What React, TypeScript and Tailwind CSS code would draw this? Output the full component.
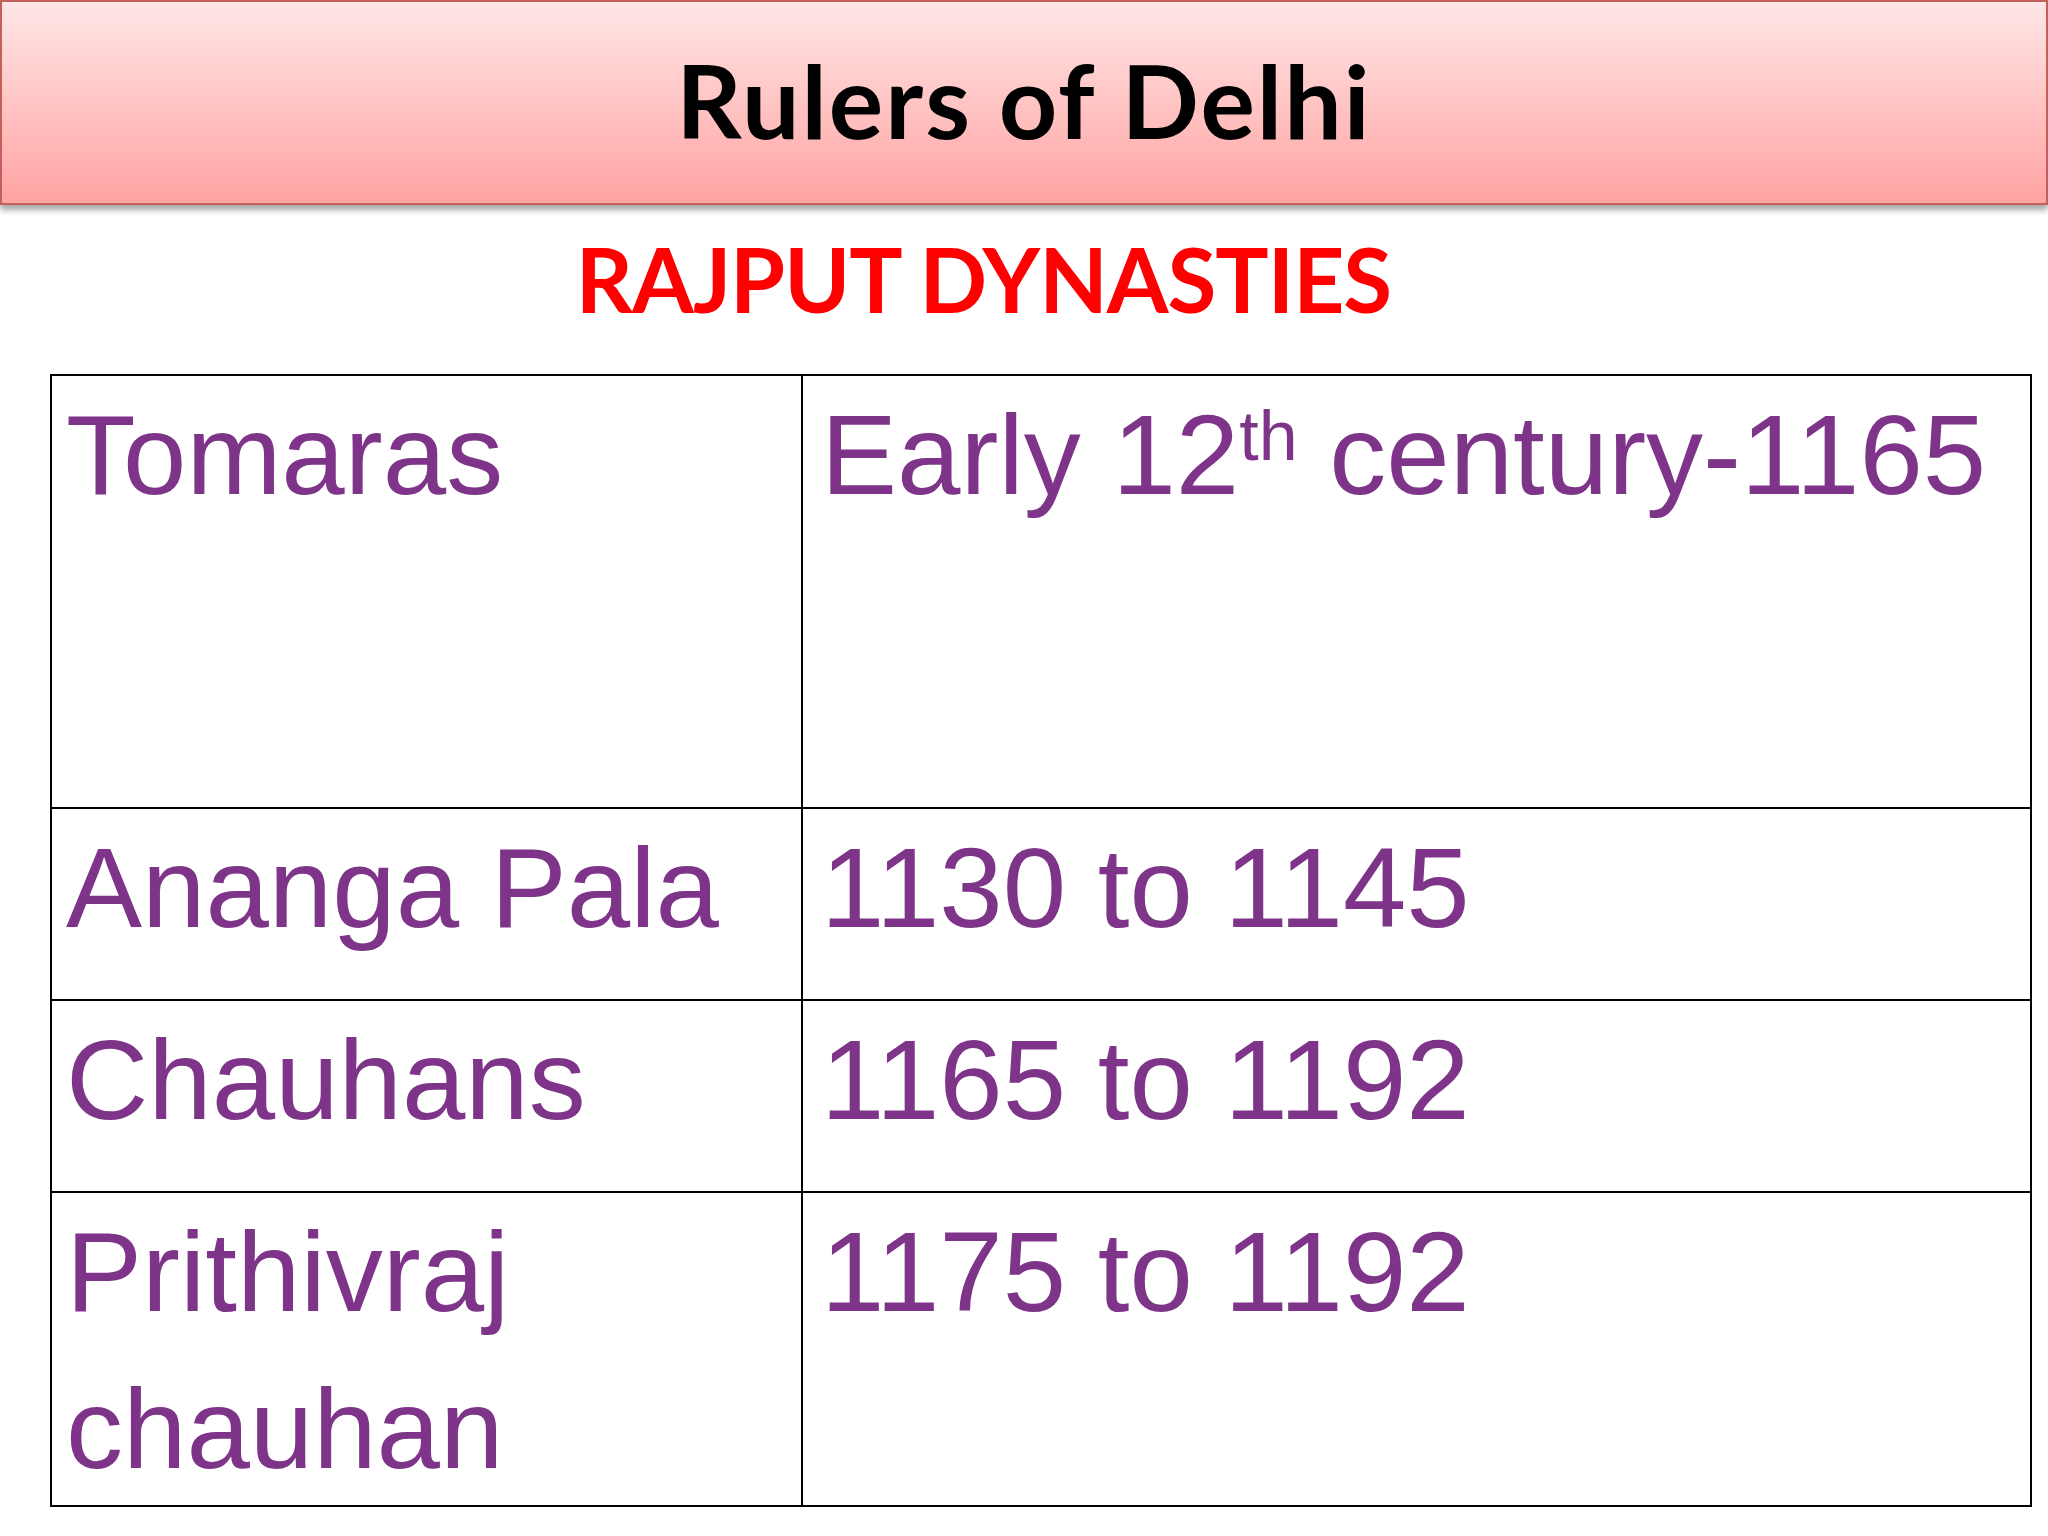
import React from "react";

const cellText =
  "font-['Liberation_Sans',Arial,sans-serif] text-[114px] leading-[157px] text-[#7e3488]";

export default function App() {
  return (
    <div className="w-[2048px] h-[1536px] bg-white overflow-hidden">
      <header className="h-[205px] border-2 border-[#c4605c] bg-gradient-to-b from-[#ffe6e6] to-[#ffa3a3] shadow-[0_5px_6px_rgba(0,0,0,0.35)] flex items-center justify-center">
        <h1 className="font-['Lato',sans-serif] font-bold text-[102px] leading-none text-black pb-[6px] tracking-[2px]">
          Rulers of Delhi
        </h1>
      </header>
      <div className="flex justify-center pr-[81px] mt-[23px] h-[100px] items-center">
        <h2 className="font-['Lato',sans-serif] font-bold text-[89px] leading-none text-[#ff0000] tracking-[-1px]">
          RAJPUT DYNASTIES
        </h2>
      </div>
      <div className="ml-[50px] mt-[46px] w-[1982px] grid grid-cols-[751px_1229px] border-l-2 border-t-2 border-black">
        <div className={`h-[433px] border-r-2 border-b-2 border-black pl-[14px] ${cellText}`}>
          Tomaras
        </div>
        <div className={`h-[433px] border-r-2 border-b-2 border-black pl-[18px] whitespace-nowrap ${cellText}`}>
          Early 12
          <span className="text-[70px] leading-none align-[34px]">th</span> century-1165
        </div>
        <div className={`h-[192px] border-r-2 border-b-2 border-black pl-[14px] ${cellText}`}>
          Ananga Pala
        </div>
        <div className={`h-[192px] border-r-2 border-b-2 border-black pl-[18px] ${cellText}`}>
          1130 to 1145
        </div>
        <div className={`h-[192px] border-r-2 border-b-2 border-black pl-[14px] ${cellText}`}>
          Chauhans
        </div>
        <div className={`h-[192px] border-r-2 border-b-2 border-black pl-[18px] ${cellText}`}>
          1165 to 1192
        </div>
        <div className={`h-[314px] border-r-2 border-b-2 border-black pl-[14px] ${cellText}`}>
          Prithivraj
          <br />
          chauhan
        </div>
        <div className={`h-[314px] border-r-2 border-b-2 border-black pl-[18px] ${cellText}`}>
          1175 to 1192
        </div>
      </div>
    </div>
  );
}
